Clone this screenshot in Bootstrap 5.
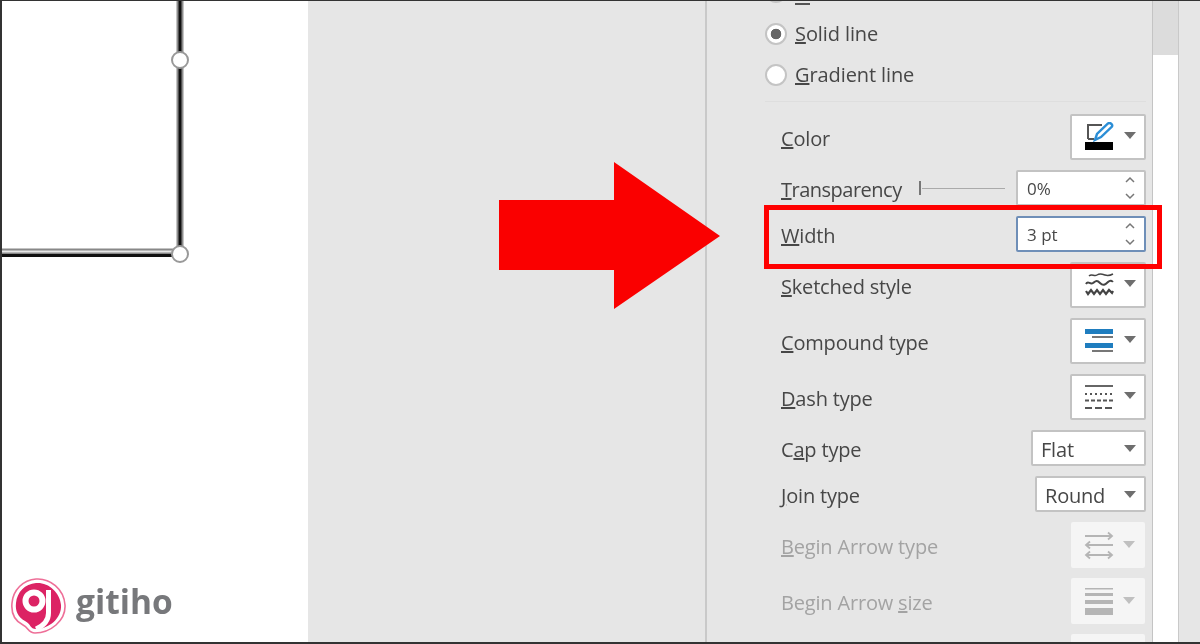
<!DOCTYPE html>
<html lang="en">
<head>
    <meta charset="UTF-8">
    <title>Format Shape - Width</title>
    <link href="https://cdn.jsdelivr.net/npm/bootstrap@5.3.0/dist/css/bootstrap.min.css" rel="stylesheet">
    <style>
        html, body { height: 100%; overflow: hidden; }
        body { background: #e6e6e6; font-family: "Open Sans", "Liberation Sans", sans-serif; color: #474747; }
        .shot { width: 1200px; height: 644px; filter: blur(.45px); border-top: 1px solid #333; border-bottom: 2px solid #333; border-left: 2px solid #333; overflow: hidden; position: relative; }
        .slide-area { width: 306px; background: #fff; position: relative; flex: none; }
        .slide-area svg { display: block; }
        .gap-area { width: 397px; flex: none; }
        .logo-wrap { position: absolute; left: 8px; bottom: 7px; }
        .logo-text { font-family: "Open Sans", sans-serif; font-weight: 700; font-size: 33.5px; line-height: 1; color: #77787b; padding-bottom: 8px; margin-left: 1px; }
        .big-arrow { position: absolute; left: 497px; top: 161px; }
        .red-box { position: absolute; left: 762px; top: 204px; width: 398px; height: 64px; border: 5px solid #ff0000; pointer-events: none; }

        .pane { border-left: 2px solid #c9c9c9; width: 495px; flex: none; }
        .pane-body { width: 445px; flex: none; padding-left: 58px; padding-right: 6px; }
        .clip-row { height: 13px; overflow: hidden; align-items: flex-start; }
        .clip-stub { width: 15px; height: 1.5px; margin-top: 2px; background: #555; }
        .radio-row { height: 40.5px; font-size: 20px; }
        .radio-row .form-check-input, .clip-row .form-check-input { width: 22px; height: 22px; margin: 0 8px 0 0; flex: none; background-color: #fff; border: 2px solid #c4c4c4; }
        .radio-row .form-check-input:checked { background-image: radial-gradient(circle, #666 0 5px, transparent 5.6px); }
        .clip-row .form-check-input { margin-top: -20px; }
        .pane-rule { border-top: 1px solid #dedede; margin: 6px 0 12px; }
        .opt-list { display: flex; flex-direction: column; gap: 10px; }
        .opt-row { padding-left: 16px; font-size: 20px; white-space: nowrap; }
        .opt-row.tall { height: 46px; }
        .opt-row.short { height: 36px; }
        .opt-row.off { color: #a3a3a3; }
        .opt-label { letter-spacing: -.18px; padding-top: 4px; }
        .opt-label.tight-label { letter-spacing: -.5px; }
        .radio-row span { letter-spacing: -.1px; }

        .pick-btn { width: 76px; height: 46px; background: #fff; border: 2px solid #c3c3c3; border-radius: 2px; padding: 0 8px 0 13px; flex: none; }
        .off .pick-btn { background: #f5f5f5; border-color: #f5f5f5; width: 74px; margin-right: 1px; padding-left: 11px; opacity: 1; }
        .caret-mark { width: 0; height: 0; border-left: 6.5px solid transparent; border-right: 6.5px solid transparent; border-top: 7px solid #6e6e6e; flex: none; }
        .pick-btn .caret-mark { margin-bottom: 4px; }
        .off .pick-btn .caret-mark { margin-bottom: 2px; border-top-color: #c0c0c0; }
        .spin-box { width: 130px; height: 36px; flex: none; background: #fff; border: 2px solid #c3c3c3; border-radius: 2px; padding: 0 8px 0 9px; font-size: 17px; }
        .spin-box span { padding-top: 2px; }
        .spin-box.active-box { border-color: #6f8fb8; }
        .drop-box { height: 36px; flex: none; background: #fff; border: 2px solid #c3c3c3; border-radius: 2px; padding: 0 8px; font-size: 20px; letter-spacing: -.2px; color: #474747; }
        .drop-box span:first-child { padding-top: 4px; }
        .drop-flat { width: 115px; }
        .drop-round { width: 111px; }
        .track-line { width: 86px; height: 14px; margin-left: auto; margin-right: 11px; position: relative; flex: none; }
        .track-line::before { content: ""; position: absolute; left: 0; top: 0; width: 2px; height: 14px; background: #777; }
        .track-line::after { content: ""; position: absolute; left: 3px; right: 0; top: 7px; height: 1px; background: #aaa; }

        .scroll-col { width: 27px; flex: none; border-left: 1px solid #c4c4c4; border-right: 1px solid #c9c9c9; }
        .scroll-top { height: 54px; background: #dcdcdc; }
        .scroll-thumb { height: 600px; background: #fff; }
    </style>
</head>
<body>

<div class="shot d-flex">

    <!-- slide with the selected shape -->
    <div class="slide-area">
        <svg width="306" height="641">
            <line x1="178" y1="0" x2="178" y2="252" stroke="#8d8d8d" stroke-width="7"/>
            <line x1="178" y1="0" x2="178" y2="252" stroke="#111" stroke-width="3"/>
            <rect x="-2" y="247.500" width="180" height="8.500" fill="#888"/>
            <rect x="-2" y="249.500" width="180" height="2" fill="#e8e8e8"/>
            <rect x="-2" y="253" width="180" height="3" fill="#111"/>
            <circle cx="178" cy="59" r="8" fill="#fff" stroke="#999" stroke-width="2"/>
            <circle cx="178" cy="253" r="8" fill="#fff" stroke="#999" stroke-width="2"/>
        </svg>
        <div class="logo-wrap d-flex align-items-center gap-2">
            <svg width="57" height="58" viewBox="0 0 57 58">
                <path d="M26 2C40 1 54 12 55 28C56 44 40 56 25 56C18 56 19 51 13 48C5 44 1 36 2 26C3 13 13 3 26 2Z" fill="#fff" stroke="#ee6f98" stroke-width="1.6"/>
                <path d="M26 6C38 5 50 15 51 28C52 41 39 52 26 52C20 52 21 47 15 44C8 40 5 34 6 26C7 15 15 7 26 6Z" fill="#dc2364"/>
                <circle cx="24" cy="24" r="8.500" fill="none" stroke="#fff" stroke-width="6"/>
                <path d="M38.500 13V36C38.500 44 33 49 26 52" fill="none" stroke="#fff" stroke-width="5"/>
            </svg>
            <span class="logo-text">gitiho</span>
        </div>
    </div>

    <div class="gap-area"></div>

    <!-- format pane -->
    <div class="pane d-flex">
        <div class="pane-body">
            <div class="clip-row d-flex">
                <input class="form-check-input" type="radio" name="fill" aria-label="No line">
                <div class="clip-stub"></div>
            </div>
            <div class="radio-row d-flex align-items-center">
                <input class="form-check-input" type="radio" name="fill" id="solidLine" checked>
                <span><u>S</u>olid line</span>
            </div>
            <div class="radio-row d-flex align-items-center">
                <input class="form-check-input" type="radio" name="fill" id="gradLine">
                <span><u>G</u>radient line</span>
            </div>
            <div class="pane-rule"></div>

            <div class="opt-list">
                <div class="opt-row tall d-flex align-items-center justify-content-between">
                    <span class="opt-label"><u>C</u>olor</span>
                    <button class="btn pick-btn d-flex align-items-center justify-content-between">
                        <svg width="30" height="30" viewBox="0 0 30 30">
                            <path d="M3 17V3H17" fill="none" stroke="#555" stroke-width="2"/>
                            <path d="M3 17H9" stroke="#555" stroke-width="2"/>
                            <path d="M10 18L12 12L23 1.500C25 0 28 2.500 27 4.500L16 15Z" fill="#fff" stroke="#2b8ed6" stroke-width="2.400"/>
                            <rect x="0" y="20" width="28" height="8" fill="#000"/>
                        </svg>
                        <span class="caret-mark"></span>
                    </button>
                </div>

                <div class="opt-row short d-flex align-items-center">
                    <span class="opt-label tight-label"><u>T</u>ransparency</span>
                    <div class="track-line"></div>
                    <div class="spin-box d-flex align-items-center justify-content-between">
                        <span>0%</span>
                        <svg width="12" height="24" viewBox="0 0 12 24"><path d="M2 6L6 2L10 6M2 18L6 22L10 18" fill="none" stroke="#777" stroke-width="1.5"/></svg>
                    </div>
                </div>

                <div class="opt-row short d-flex align-items-center justify-content-between">
                    <span class="opt-label"><u>W</u>idth</span>
                    <div class="spin-box active-box d-flex align-items-center justify-content-between">
                        <span>3 pt</span>
                        <svg width="12" height="24" viewBox="0 0 12 24"><path d="M2 6L6 2L10 6M2 18L6 22L10 18" fill="none" stroke="#777" stroke-width="1.5"/></svg>
                    </div>
                </div>

                <div class="opt-row tall d-flex align-items-center justify-content-between">
                    <span class="opt-label"><u>S</u>ketched style</span>
                    <button class="btn pick-btn d-flex align-items-center justify-content-between">
                        <svg width="30" height="30" viewBox="0 0 30 30" fill="none" stroke="#444">
                            <path d="M4 6C7 3 9 7 12 5S17 4 20 5S26 5 28 4" stroke-width="1.500"/>
                            <path d="M1 14C3 10 5 15 8 13S12 10 15 13S20 15 23 12S27 12 28 11" stroke-width="2"/>
                            <path d="M1 21L3 24L6 20L9 24L12 20L15 24L18 20L21 24L24 20L27 23L28 21" stroke-width="2.200"/>
                        </svg>
                        <span class="caret-mark"></span>
                    </button>
                </div>

                <div class="opt-row tall d-flex align-items-center justify-content-between">
                    <span class="opt-label"><u>C</u>ompound type</span>
                    <button class="btn pick-btn d-flex align-items-center justify-content-between">
                        <svg width="30" height="30" viewBox="0 0 30 30">
                            <rect x="0" y="3" width="28" height="5" fill="#1f7dbf"/>
                            <rect x="7" y="10" width="21" height="2" fill="#777"/>
                            <rect x="0" y="17" width="28" height="5" fill="#1f7dbf"/>
                            <rect x="7" y="24" width="21" height="2" fill="#777"/>
                        </svg>
                        <span class="caret-mark"></span>
                    </button>
                </div>

                <div class="opt-row tall d-flex align-items-center justify-content-between">
                    <span class="opt-label"><u>D</u>ash type</span>
                    <button class="btn pick-btn d-flex align-items-center justify-content-between">
                        <svg width="30" height="30" viewBox="0 0 30 30" fill="none" stroke="#555">
                            <path d="M0 4H28" stroke-width="1.800"/>
                            <path d="M0 12H28" stroke-width="2.200" stroke-dasharray="2 3"/>
                            <path d="M0 18.500H28" stroke-width="2.200" stroke-dasharray="4 2"/>
                            <path d="M0 26H28" stroke-width="2.200" stroke-dasharray="7 3"/>
                        </svg>
                        <span class="caret-mark"></span>
                    </button>
                </div>

                <div class="opt-row short d-flex align-items-center justify-content-between">
                    <span class="opt-label">C<u>a</u>p type</span>
                    <div class="drop-box drop-flat d-flex align-items-center justify-content-between">
                        <span>Flat</span><span class="caret-mark"></span>
                    </div>
                </div>

                <div class="opt-row short d-flex align-items-center justify-content-between">
                    <span class="opt-label"><u>J</u>oin type</span>
                    <div class="drop-box drop-round d-flex align-items-center justify-content-between">
                        <span>Round</span><span class="caret-mark"></span>
                    </div>
                </div>

                <div class="opt-row tall off d-flex align-items-center justify-content-between">
                    <span class="opt-label"><u>B</u>egin Arrow type</span>
                    <button class="btn pick-btn d-flex align-items-center justify-content-between" disabled>
                        <svg width="30" height="30" viewBox="0 0 30 30" fill="none" stroke="#b5b5b5" stroke-width="1.800">
                            <path d="M1 6H28M24 2.500L28 6L24 9.500"/>
                            <path d="M29 15H2M6 11.500L2 15L6 18.500"/>
                            <path d="M3 25H27M6 21.500L2 25L6 28.500M24 21.500L28 25L24 28.500"/>
                        </svg>
                        <span class="caret-mark"></span>
                    </button>
                </div>

                <div class="opt-row tall off d-flex align-items-center justify-content-between">
                    <span class="opt-label">Begin Arrow <u>s</u>ize</span>
                    <button class="btn pick-btn d-flex align-items-center justify-content-between" disabled>
                        <svg width="30" height="30" viewBox="0 0 30 30">
                            <rect x="1" y="2" width="28" height="1.500" fill="#b5b5b5"/>
                            <rect x="1" y="7" width="28" height="3" fill="#b5b5b5"/>
                            <rect x="1" y="14" width="28" height="4" fill="#b5b5b5"/>
                            <rect x="1" y="22" width="28" height="7" fill="#b5b5b5"/>
                        </svg>
                        <span class="caret-mark"></span>
                    </button>
                </div>

                <div class="opt-row tall off d-flex justify-content-end">
                    <button class="btn pick-btn" disabled aria-label="End Arrow type"></button>
                </div>
            </div>
        </div>
        <div class="scroll-col">
            <div class="scroll-top"></div>
            <div class="scroll-thumb"></div>
        </div>
    </div>

    <!-- callouts on top of the screenshot -->
    <svg class="big-arrow" width="224" height="148" viewBox="0 0 224 148">
        <path d="M0 38H115V0L221 74L115 147V108H0Z" fill="#fa0000"/>
    </svg>
    <div class="red-box"></div>
</div>

<script src="https://cdn.jsdelivr.net/npm/bootstrap@5.3.0/dist/js/bootstrap.bundle.min.js"></script>
</body>
</html>
